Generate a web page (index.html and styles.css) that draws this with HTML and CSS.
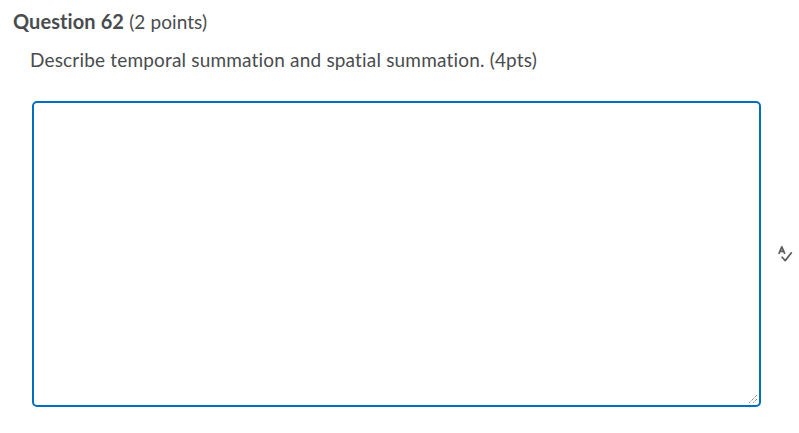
FILE: index.html
```html
<!DOCTYPE html>
<html>
<head>
<meta charset="utf-8">
<link rel="stylesheet" href="styles.css">
</head>
<body>
<div class="question">
  <h2 class="q-title"><strong>Question 62</strong> <span class="pts">(2 points)</span></h2>
  <div class="q-body">
    <p class="q-text">Describe temporal summation and spatial summation. (4pts)</p>
    <div class="answer-row">
      <div class="answer-box">
        <textarea class="answer" aria-label="Answer"></textarea>
        <svg class="grip" width="10" height="10" viewBox="0 0 10 10">
          <path d="M9 1 L1 9 M9 5 L5 9" stroke="#555" stroke-width="1" stroke-dasharray="1 1" fill="none"/>
        </svg>
      </div>
      <div class="side">
        <svg class="spell" width="16" height="16" viewBox="0 0 16 16">
          <path d="M0.8 7.8 L3.8 0.8 L6.8 7.8 M1.8 5.4 H5.8" stroke="#5a5e60" stroke-width="1.7" fill="none" stroke-linejoin="round"/>
          <path d="M4.2 11.2 L7.2 14.6 L13.4 6.8" stroke="#5a5e60" stroke-width="1.7" fill="none" stroke-linecap="round" stroke-linejoin="round"/>
        </svg>
      </div>
    </div>
  </div>
</div>
</body>
</html>
```

FILE: styles.css
```css
html, body {
  margin: 0;
  padding: 0;
  background: #fff;
}
body {
  font-family: Lato, "Noto Sans", sans-serif;
  color: #494c4e;
  font-variant-ligatures: none;
}
.question {
  padding: 9px 0 0 13px;
}
.q-title {
  margin: 0;
  font-size: 20px;
  line-height: 24px;
  font-weight: normal;
  letter-spacing: 0.08px;
}
.q-title strong {
  font-weight: 700;
}
.pts {
  font-size: 19px;
}
.q-body {
  padding-left: 17px;
}
.q-text {
  margin: 14px 0 0 0;
  font-size: 19px;
  line-height: 24px;
  letter-spacing: 0.18px;
}
.answer-row {
  display: flex;
  align-items: center;
  margin-top: 29px;
  margin-left: 2px;
}
.answer-box {
  position: relative;
  width: 729px;
  height: 306px;
}
.answer {
  box-sizing: border-box;
  width: 100%;
  height: 100%;
  border: 2px solid #006fbf;
  border-radius: 5px;
  resize: none;
  outline: none;
  display: block;
  margin: 0;
}
.grip {
  position: absolute;
  right: 3px;
  bottom: 3px;
}
.side {
  padding-left: 17px;
  display: flex;
}
```
